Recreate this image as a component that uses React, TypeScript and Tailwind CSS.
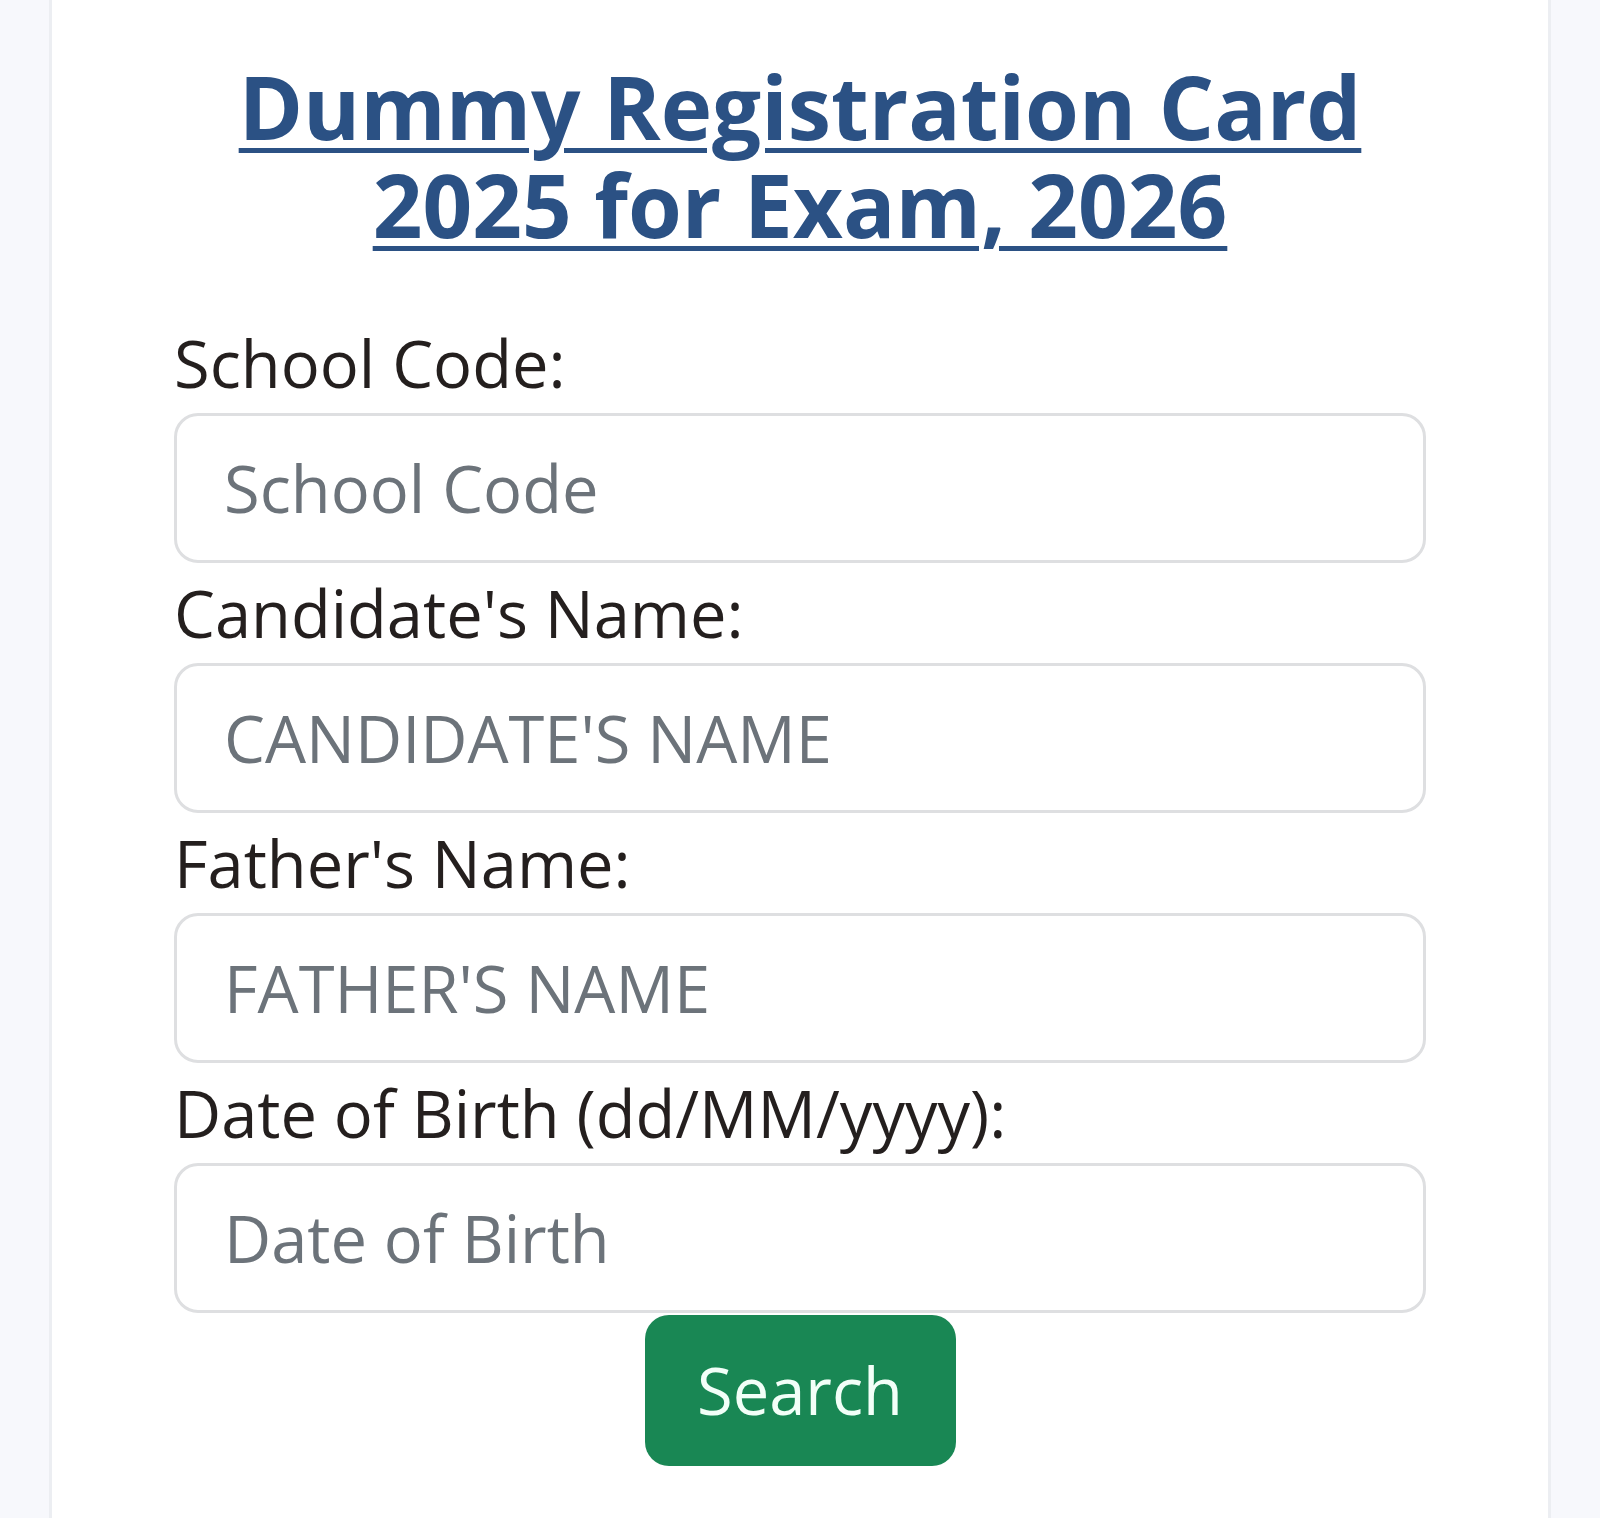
import React from "react";

const fields = [
  { label: "School Code:", placeholder: "School Code" },
  { label: "Candidate's Name:", placeholder: "CANDIDATE'S NAME" },
  { label: "Father's Name:", placeholder: "FATHER'S NAME" },
  { label: "Date of Birth (dd/MM/yyyy):", placeholder: "Date of Birth" },
];

const App = () => {
  return (
    <div className="min-h-[1518px] bg-[#f7f8fc] px-[49px] font-['Open_Sans',sans-serif]">
      <div className="min-h-[1518px] border-x-[3px] border-[#eceef2] bg-white px-[122px] pt-[57px]">
        <h1 className="mb-[60px] text-center text-[87px] font-bold leading-[98px] text-[#2b5184] underline decoration-[5px] underline-offset-[8px]">
          Dummy Registration Card
          <br />
          2025 for Exam, 2026
        </h1>
        <form onSubmit={(e) => e.preventDefault()}>
          {fields.map((field) => (
            <div key={field.label}>
              <label className="block h-[100px] text-[65px] leading-[100px] text-[#241f1e]">
                {field.label}
              </label>
              <input
                type="text"
                placeholder={field.placeholder}
                className="block h-[150px] w-full rounded-[24px] border-[3px] border-[#dedfe1] bg-white px-[47px] text-[65px] text-[#212529] placeholder:text-[#6c737a] focus:outline-none"
              />
            </div>
          ))}
          <div className="flex justify-center pt-[2px]">
            <button
              type="submit"
              className="h-[151px] w-[311px] rounded-[24px] bg-[#198754] text-[65px] text-[#f2fff8]"
            >
              Search
            </button>
          </div>
        </form>
      </div>
    </div>
  );
};

export default App;
